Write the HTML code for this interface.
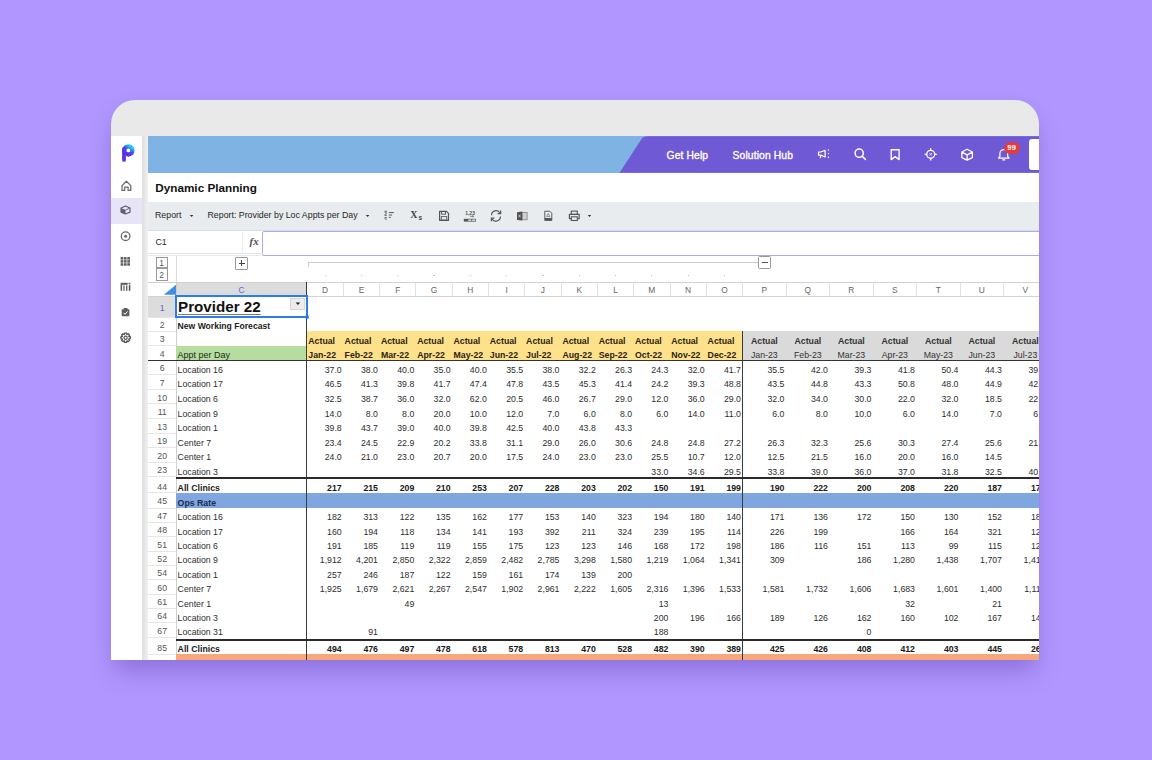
<!DOCTYPE html>
<html><head><meta charset="utf-8"><style>
*{margin:0;padding:0;box-sizing:border-box}
html,body{width:1152px;height:760px;overflow:hidden;background:#b096fe;font-family:"Liberation Sans",sans-serif}
.abs{position:absolute}
#shadow{position:absolute;left:131px;top:560px;width:888px;height:100px;box-shadow:0 18px 34px rgba(70,30,150,0.32);border-radius:10px}
#win{position:absolute;left:111px;top:100px;width:928px;height:560px;border-radius:24px 24px 0 0;overflow:hidden;background:#e9e9e9;box-shadow:0 14px 24px -4px rgba(70,35,150,0.34)}
.t{position:absolute;white-space:nowrap;line-height:1}
.c{text-align:center}
.rt{text-align:right}
svg{position:absolute;overflow:visible}
</style></head><body>

<div id="win">
<div class="abs" style="left:0.00px;top:36.30px;width:31.00px;height:523.70px;background:#fff"></div>
<div class="abs" style="left:31.00px;top:36.30px;width:6.00px;height:523.70px;background:linear-gradient(90deg,#dedede,#f0f0f0)"></div>
<div class="abs" style="left:0.00px;top:98.00px;width:31.00px;height:25.50px;background:#e7e4f8"></div>
<svg style="left:4.00px;top:40.00px" width="25.00" height="25.00" viewBox="115.00 140.00 25.00 25.00"><defs><linearGradient id="lg" x1="0.15" y1="0.85" x2="0.75" y2="0.05"><stop offset="0" stop-color="#5533e6"/><stop offset="0.5" stop-color="#4848ee"/><stop offset="0.78" stop-color="#2f8cf0"/><stop offset="1" stop-color="#20cdf0"/></linearGradient></defs>
<rect x="122.1" y="147" width="3.8" height="14.8" rx="1.9" fill="#5535e4"/>
<circle cx="128.4" cy="150.4" r="4.1" fill="none" stroke="url(#lg)" stroke-width="4.3"/></svg>
<svg style="left:7.00px;top:76.00px" width="16.00" height="18.00" viewBox="118.00 176.00 16.00 18.00"><path d="M122 185.6 L126.4 181.2 L130.8 185.6 V190.4 H128.1 V187.2 H124.7 V190.4 H122 Z" fill="none" stroke="#6b6b6b" stroke-width="1.25" stroke-linejoin="round"/></svg>
<svg style="left:6.00px;top:103.00px" width="16.00" height="16.00" viewBox="117.00 203.00 16.00 16.00"><path d="M125.5 205.9 L130 208 V212.1 L125.5 214 L121 212.1 V208 Z" fill="none" stroke="#5c5c66" stroke-width="1.15" stroke-linejoin="round"/><path d="M121.2 208.1 L125.5 210.1 L125.5 213.8 L121.2 212 Z" fill="#5c5c66"/><path d="M125.5 210.1 L129.8 208.1" stroke="#5c5c66" stroke-width="0.9"/></svg>
<svg style="left:7.00px;top:129.00px" width="16.00" height="16.00" viewBox="118.00 229.00 16.00 16.00"><circle cx="125.6" cy="236.2" r="4.3" fill="none" stroke="#6b6b6b" stroke-width="1.3"/><circle cx="125.6" cy="236.2" r="1.5" fill="#6b6b6b"/></svg>
<svg style="left:7.00px;top:154.00px" width="16.00" height="16.00" viewBox="118.00 254.00 16.00 16.00"><rect x="120.60" y="257.10" width="2.7" height="2.5" fill="#5e5e5e"/><rect x="120.60" y="260.15" width="2.7" height="2.5" fill="#5e5e5e"/><rect x="120.60" y="263.20" width="2.7" height="2.5" fill="#5e5e5e"/><rect x="123.95" y="257.10" width="2.7" height="2.5" fill="#5e5e5e"/><rect x="123.95" y="260.15" width="2.7" height="2.5" fill="#5e5e5e"/><rect x="123.95" y="263.20" width="2.7" height="2.5" fill="#5e5e5e"/><rect x="127.30" y="257.10" width="2.7" height="2.5" fill="#5e5e5e"/><rect x="127.30" y="260.15" width="2.7" height="2.5" fill="#5e5e5e"/><rect x="127.30" y="263.20" width="2.7" height="2.5" fill="#5e5e5e"/></svg>
<svg style="left:7.00px;top:180.00px" width="16.00" height="14.00" viewBox="118.00 280.00 16.00 14.00"><rect x="120.6" y="282.8" width="7.1" height="2" fill="#5a5a5a"/><rect x="128.6" y="282.8" width="1.8" height="1.6" fill="#5a5a5a"/><rect x="120.6" y="284.6" width="1.5" height="6.2" fill="#5a5a5a"/><rect x="123.4" y="285.4" width="1.2" height="5.4" fill="#5a5a5a"/><rect x="126.1" y="285.4" width="1.3" height="5.4" fill="#5a5a5a"/><rect x="128.8" y="285.2" width="1.6" height="5.6" fill="#5a5a5a"/></svg>
<svg style="left:7.00px;top:205.00px" width="16.00" height="14.00" viewBox="118.00 305.00 16.00 14.00"><rect x="121.7" y="309.2" width="7.7" height="7.1" rx="1" fill="#5e5e5e"/><rect x="123.6" y="308" width="3.9" height="2.2" rx="0.6" fill="#5e5e5e"/><path d="M123.5 312.8 L125 314.3 L127.6 311.4" fill="none" stroke="#fff" stroke-width="1"/></svg>
<svg style="left:7.00px;top:230.00px" width="16.00" height="16.00" viewBox="118.00 330.00 16.00 16.00"><path d="M130.21 336.77 L130.21 338.63 L128.88 338.93 L128.79 339.14 L129.52 340.30 L128.20 341.62 L127.04 340.89 L126.83 340.98 L126.53 342.31 L124.67 342.31 L124.37 340.98 L124.16 340.89 L123.00 341.62 L121.68 340.30 L122.41 339.14 L122.32 338.93 L120.99 338.63 L120.99 336.77 L122.32 336.47 L122.41 336.26 L121.68 335.10 L123.00 333.78 L124.16 334.51 L124.37 334.42 L124.67 333.09 L126.53 333.09 L126.83 334.42 L127.04 334.51 L128.20 333.78 L129.52 335.10 L128.79 336.26 L128.88 336.47 Z" fill="none" stroke="#555" stroke-width="1.35" stroke-linejoin="round"/><circle cx="125.60" cy="337.70" r="1.6" fill="none" stroke="#555" stroke-width="1.2"/></svg>
<div class="abs" style="left:37.00px;top:36.30px;width:891.00px;height:36.40px;background:#7eb3e4"></div>
<svg style="left:506.00px;top:36.00px" width="422.00" height="37.00" viewBox="617.00 136.00 422.00 37.00"><path d="M618.4 172.7 Q619.6 172.7 620.4 171.4 L641.2 139.4 Q643 136.3 647.8 136.3 L1039 136.3 L1039 172.7 Z" fill="#7059d5"/></svg>
<div class="t " style="left:555.60px;top:50.58px;font-size:10.30px;color:#fff;-webkit-text-stroke:0.35px #fff;letter-spacing:0.12px">Get Help</div>
<div class="t " style="left:621.60px;top:50.58px;font-size:10.30px;color:#fff;-webkit-text-stroke:0.35px #fff;letter-spacing:0.12px">Solution Hub</div>
<svg style="left:703.00px;top:46.00px" width="20.00" height="16.00" viewBox="814.00 146.00 20.00 16.00"><path d="M818.5 152 H820.9 L825.1 150.3 V157 L820.9 155.1 H818.5 Z" fill="none" stroke="#fff" stroke-width="1.2" stroke-linejoin="round"/><path d="M820.5 155.3 V158.3" stroke="#fff" stroke-width="1.2"/><circle cx="828.4" cy="150" r="0.7" fill="#fff"/><circle cx="828.4" cy="153.6" r="0.7" fill="#fff"/><circle cx="828.4" cy="157.3" r="0.7" fill="#fff"/></svg>
<svg style="left:741.00px;top:46.00px" width="16.00" height="16.00" viewBox="852.00 146.00 16.00 16.00"><circle cx="859.2" cy="153.2" r="4.1" fill="none" stroke="#fff" stroke-width="1.5"/><path d="M862.2 156.3 L865.4 159.4" stroke="#fff" stroke-width="1.6" stroke-linecap="round"/></svg>
<svg style="left:777.00px;top:46.00px" width="14.00" height="16.00" viewBox="888.00 146.00 14.00 16.00"><path d="M891.2 149.7 H899.1 V159.6 L895.15 156.6 L891.2 159.6 Z" fill="none" stroke="#fff" stroke-width="1.35" stroke-linejoin="round"/></svg>
<svg style="left:812.00px;top:46.00px" width="16.00" height="16.00" viewBox="923.00 146.00 16.00 16.00"><circle cx="930.7" cy="154.3" r="4" fill="none" stroke="#fff" stroke-width="1.35"/><path d="M930.7 148.2 V150.8 M930.7 157.8 V160.4 M924.6 154.3 H927.2 M934.2 154.3 H936.8" stroke="#fff" stroke-width="1.35"/><path d="M929.6 153.2 L931.8 155.4 M931.8 153.2 L929.6 155.4" stroke="#fff" stroke-width="0.9"/></svg>
<svg style="left:848.00px;top:46.00px" width="16.00" height="16.00" viewBox="959.00 146.00 16.00 16.00"><path d="M967.1 149.2 L972.4 152 V157.6 L967.1 160.2 L961.8 157.6 V152 Z M961.9 152.1 L967.1 154.8 L972.3 152.1 M967.1 154.8 V160" fill="none" stroke="#fff" stroke-width="1.3" stroke-linejoin="round"/></svg>
<svg style="left:885.00px;top:46.00px" width="16.00" height="16.00" viewBox="996.00 146.00 16.00 16.00"><path d="M998.6 158.2 H1009 L1007.7 156.4 V153.5 A3.9 3.9 0 0 0 999.9 153.5 V156.4 Z" fill="none" stroke="#fff" stroke-width="1.25" stroke-linejoin="round"/><path d="M1002.3 159.8 H1005.3" stroke="#fff" stroke-width="1.2"/></svg>
<div class="abs" style="left:892.80px;top:42.10px;width:16.00px;height:11.80px;background:#e23d3d;border-radius:6px"></div>
<div class="t c" style="left:892.80px;top:44.17px;width:15.80px;font-size:7.60px;font-weight:bold;color:#fff;letter-spacing:0.1px">99</div>
<div class="abs" style="left:918.00px;top:39.30px;width:16.00px;height:30.70px;background:#fff;border-radius:3px"></div>
<div class="abs" style="left:37.00px;top:72.70px;width:891.00px;height:28.90px;background:#fff"></div>
<div class="t " style="left:44.30px;top:81.88px;font-size:11.72px;font-weight:bold;color:#111">Dynamic Planning</div>
<div class="abs" style="left:37.00px;top:101.60px;width:891.00px;height:28.90px;background:#e9ecef"></div>
<div class="abs" style="left:37.00px;top:130.00px;width:891.00px;height:1.00px;background:#d9dce3"></div>
<div class="t " style="left:44.00px;top:111.35px;font-size:8.80px;color:#262626">Report</div>
<svg style="left:77.00px;top:113.00px" width="8.00" height="5.00" viewBox="188.00 213.00 8.00 5.00"><path d="M189.8 215 H193.4 L191.6 216.9 Z" fill="#333"/></svg>
<div class="t " style="left:96.50px;top:111.35px;font-size:8.80px;color:#262626">Report: Provider by Loc Appts per Day</div>
<svg style="left:253.00px;top:113.00px" width="8.00" height="5.00" viewBox="364.00 213.00 8.00 5.00"><path d="M365.8 215 H369.4 L367.6 216.9 Z" fill="#333"/></svg>
<svg style="left:271.00px;top:108.00px" width="14.00" height="16.00" viewBox="382.00 208.00 14.00 16.00"><path d="M384.6 211.2 H386.8 M384.6 212.2 H386.8 M384.6 214.4 L386.8 213.6 M384.6 215.4 H386.8 M384.6 217.6 H386.8 M384.6 218.6 L386.8 219.4" stroke="#505050" stroke-width="0.85"/><path d="M388.8 212.6 H393.9 M388.8 215 H392.1 M388.8 217.4 H390.7" stroke="#5a5a5a" stroke-width="1"/></svg>
<div class="t " style="left:299.30px;top:109.73px;font-size:10.00px;font-family:&quot;Liberation Serif&quot;,serif;color:#444;font-weight:bold">X</div>
<div class="t " style="left:307.40px;top:115.41px;font-size:6.60px;color:#444;font-weight:bold">s</div>
<svg style="left:326.00px;top:109.00px" width="14.00" height="14.00" viewBox="437.00 209.00 14.00 14.00"><path d="M439.6 211.4 H446.6 L448.5 213.3 V220.4 H439.6 Z" fill="none" stroke="#555" stroke-width="1.2" stroke-linejoin="round"/><rect x="441.6" y="211.6" width="4" height="2.6" fill="none" stroke="#555" stroke-width="0.9"/><rect x="441.3" y="216.6" width="5.5" height="3.5" fill="none" stroke="#555" stroke-width="0.9"/></svg>
<svg style="left:351.00px;top:108.00px" width="16.00" height="16.00" viewBox="462.00 208.00 16.00 16.00"><text x="465.2" y="214.6" font-size="5" font-family="Liberation Sans" font-weight="bold" fill="#555">1,23</text><path d="M470 216.3 H473.6 M472.4 215.4 L473.6 216.3 L472.4 217.2" stroke="#555" stroke-width="0.7" fill="none"/><rect x="463.8" y="218.8" width="12.1" height="2.8" fill="#555"/><rect x="468.3" y="219.5" width="3" height="1.4" fill="#e9ecef"/><rect x="472.2" y="219.5" width="3" height="1.4" fill="#e9ecef"/></svg>
<svg style="left:377.00px;top:108.00px" width="16.00" height="16.00" viewBox="488.00 208.00 16.00 16.00"><path d="M491.5 215.2 A4.6 4.6 0 0 1 500 212.8" fill="none" stroke="#555" stroke-width="1.2"/><path d="M500.6 210.6 V213.6 H497.6" fill="none" stroke="#555" stroke-width="1.2"/><path d="M500.5 216.6 A4.6 4.6 0 0 1 492 219" fill="none" stroke="#555" stroke-width="1.2"/><path d="M491.4 221.2 V218.2 H494.4" fill="none" stroke="#555" stroke-width="1.2"/></svg>
<svg style="left:404.00px;top:109.00px" width="14.00" height="14.00" viewBox="515.00 209.00 14.00 14.00"><rect x="521.5" y="212.6" width="5.6" height="7.2" fill="#d0d0d0" stroke="#777" stroke-width="0.7"/><path d="M517 212.2 L522.4 211.6 V220.6 L517 220 Z" fill="#505050"/><path d="M518.6 214.6 L520.6 217.4 M520.6 214.6 L518.6 217.4" stroke="#fff" stroke-width="0.6"/></svg>
<svg style="left:431.00px;top:109.00px" width="14.00" height="14.00" viewBox="542.00 209.00 14.00 14.00"><path d="M544.8 211.2 H549.8 L551.8 213.2 V220.4 H544.8 Z" fill="none" stroke="#555" stroke-width="0.95" stroke-linejoin="round"/><rect x="544.8" y="218" width="7" height="2.4" fill="#555"/><path d="M546.6 216.6 L548.2 213.4 L550 216.6 Z" fill="none" stroke="#555" stroke-width="0.6"/></svg>
<svg style="left:456.00px;top:108.00px" width="16.00" height="16.00" viewBox="567.00 208.00 16.00 16.00"><rect x="571.3" y="211.1" width="6" height="3.3" fill="none" stroke="#555" stroke-width="1.1"/><path d="M571 218.6 H569.4 V214.4 H579.2 V218.6 H577.6" fill="none" stroke="#555" stroke-width="1.2" stroke-linejoin="round"/><rect x="571.3" y="216.8" width="6" height="3.7" fill="none" stroke="#555" stroke-width="1.1"/></svg>
<svg style="left:475.00px;top:113.00px" width="8.00" height="5.00" viewBox="586.00 213.00 8.00 5.00"><path d="M587.8 215 H591.2 L589.5 216.9 Z" fill="#333"/></svg>
<div class="abs" style="left:37.00px;top:131.40px;width:891.00px;height:23.60px;background:#fff"></div>
<div class="t " style="left:44.50px;top:137.85px;font-size:8.80px;color:#262626">C1</div>
<div class="abs" style="left:131.00px;top:132.00px;width:1.00px;height:22.00px;background:#ececec"></div>
<div class="t " style="left:138.60px;top:136.29px;font-size:11.00px;font-family:&quot;Liberation Serif&quot;,serif;color:#505050;font-weight:bold"><i>fx</i></div>
<div class="abs" style="left:151.30px;top:130.60px;width:800px;height:25.00px;border:1.2px solid #b0a7e8;border-radius:2px;background:#fff"></div>
<div class="abs" style="left:37.00px;top:153.00px;width:114.50px;height:1.00px;background:#e4e4e4"></div>
<div class="abs" style="left:37.00px;top:155.60px;width:891.00px;height:26.40px;background:#fff"></div>
<div class="abs" style="left:44.60px;top:156.60px;width:12.10px;height:11.70px;border:1px solid #999;background:#fff"></div>
<div class="abs" style="left:44.60px;top:168.00px;width:12.10px;height:12.50px;border:1px solid #999;background:#fff"></div>
<div class="t c" style="left:44.60px;top:158.89px;width:12.10px;font-size:8.40px;color:#555">1</div>
<div class="t c" style="left:44.60px;top:171.19px;width:12.10px;font-size:8.40px;color:#555">2</div>
<div class="abs" style="left:65.00px;top:155.60px;width:1.00px;height:26.40px;background:#dcdcdc"></div>
<div class="abs" style="left:124.30px;top:156.60px;width:13.10px;height:13.00px;border:1px solid #999;border-radius:1px;background:#fff"></div>
<div class="abs" style="left:127.60px;top:162.60px;width:6.60px;height:1.20px;background:#444"></div>
<div class="abs" style="left:130.30px;top:159.90px;width:1.20px;height:6.60px;background:#444"></div>
<div class="abs" style="left:197.00px;top:162.30px;width:450.20px;height:1.00px;background:#cdcdcd"></div>
<div class="abs" style="left:197.00px;top:162.30px;width:0.90px;height:5.10px;background:#cdcdcd"></div>
<div class="abs" style="left:647.20px;top:156.10px;width:13.00px;height:13.20px;border:1px solid #999;border-radius:1.5px;background:#fff"></div>
<div class="abs" style="left:650.80px;top:162.30px;width:6.40px;height:1.20px;background:#555"></div>
<div class="abs" style="left:213.55px;top:175.00px;width:1.20px;height:1.20px;background:#c0c0c0"></div>
<div class="abs" style="left:249.85px;top:175.00px;width:1.20px;height:1.20px;background:#c0c0c0"></div>
<div class="abs" style="left:286.15px;top:175.00px;width:1.20px;height:1.20px;background:#c0c0c0"></div>
<div class="abs" style="left:322.45px;top:175.00px;width:1.20px;height:1.20px;background:#c0c0c0"></div>
<div class="abs" style="left:358.75px;top:175.00px;width:1.20px;height:1.20px;background:#c0c0c0"></div>
<div class="abs" style="left:395.05px;top:175.00px;width:1.20px;height:1.20px;background:#c0c0c0"></div>
<div class="abs" style="left:431.35px;top:175.00px;width:1.20px;height:1.20px;background:#c0c0c0"></div>
<div class="abs" style="left:467.65px;top:175.00px;width:1.20px;height:1.20px;background:#c0c0c0"></div>
<div class="abs" style="left:503.95px;top:175.00px;width:1.20px;height:1.20px;background:#c0c0c0"></div>
<div class="abs" style="left:540.25px;top:175.00px;width:1.20px;height:1.20px;background:#c0c0c0"></div>
<div class="abs" style="left:576.55px;top:175.00px;width:1.20px;height:1.20px;background:#c0c0c0"></div>
<div class="abs" style="left:612.85px;top:175.00px;width:1.20px;height:1.20px;background:#c0c0c0"></div>
<div class="abs" style="left:37.00px;top:182.00px;width:891.00px;height:378.00px;background:#fff"></div>
<div class="abs" style="left:37.00px;top:181.60px;width:891.00px;height:1.00px;background:#d2d2d2"></div>
<div class="abs" style="left:65.30px;top:182.60px;width:130.70px;height:13.90px;background:#dcdcdc"></div>
<div class="t c" style="left:65.30px;top:185.69px;width:130.70px;font-size:8.40px;color:#6a5cd6">C</div>
<div class="t c" style="left:196.00px;top:185.69px;width:36.30px;font-size:8.40px;color:#666">D</div>
<div class="abs" style="left:231.80px;top:182.60px;width:1.00px;height:13.90px;background:#e2e2e2"></div>
<div class="t c" style="left:232.30px;top:185.69px;width:36.30px;font-size:8.40px;color:#666">E</div>
<div class="abs" style="left:268.10px;top:182.60px;width:1.00px;height:13.90px;background:#e2e2e2"></div>
<div class="t c" style="left:268.60px;top:185.69px;width:36.30px;font-size:8.40px;color:#666">F</div>
<div class="abs" style="left:304.40px;top:182.60px;width:1.00px;height:13.90px;background:#e2e2e2"></div>
<div class="t c" style="left:304.90px;top:185.69px;width:36.30px;font-size:8.40px;color:#666">G</div>
<div class="abs" style="left:340.70px;top:182.60px;width:1.00px;height:13.90px;background:#e2e2e2"></div>
<div class="t c" style="left:341.20px;top:185.69px;width:36.30px;font-size:8.40px;color:#666">H</div>
<div class="abs" style="left:377.00px;top:182.60px;width:1.00px;height:13.90px;background:#e2e2e2"></div>
<div class="t c" style="left:377.50px;top:185.69px;width:36.30px;font-size:8.40px;color:#666">I</div>
<div class="abs" style="left:413.30px;top:182.60px;width:1.00px;height:13.90px;background:#e2e2e2"></div>
<div class="t c" style="left:413.80px;top:185.69px;width:36.30px;font-size:8.40px;color:#666">J</div>
<div class="abs" style="left:449.60px;top:182.60px;width:1.00px;height:13.90px;background:#e2e2e2"></div>
<div class="t c" style="left:450.10px;top:185.69px;width:36.30px;font-size:8.40px;color:#666">K</div>
<div class="abs" style="left:485.90px;top:182.60px;width:1.00px;height:13.90px;background:#e2e2e2"></div>
<div class="t c" style="left:486.40px;top:185.69px;width:36.30px;font-size:8.40px;color:#666">L</div>
<div class="abs" style="left:522.20px;top:182.60px;width:1.00px;height:13.90px;background:#e2e2e2"></div>
<div class="t c" style="left:522.70px;top:185.69px;width:36.30px;font-size:8.40px;color:#666">M</div>
<div class="abs" style="left:558.50px;top:182.60px;width:1.00px;height:13.90px;background:#e2e2e2"></div>
<div class="t c" style="left:559.00px;top:185.69px;width:36.30px;font-size:8.40px;color:#666">N</div>
<div class="abs" style="left:594.80px;top:182.60px;width:1.00px;height:13.90px;background:#e2e2e2"></div>
<div class="t c" style="left:595.30px;top:185.69px;width:36.30px;font-size:8.40px;color:#666">O</div>
<div class="abs" style="left:631.10px;top:182.60px;width:1.00px;height:13.90px;background:#e2e2e2"></div>
<div class="t c" style="left:631.60px;top:185.69px;width:43.50px;font-size:8.40px;color:#666">P</div>
<div class="abs" style="left:674.60px;top:182.60px;width:1.00px;height:13.90px;background:#e2e2e2"></div>
<div class="t c" style="left:675.10px;top:185.69px;width:43.50px;font-size:8.40px;color:#666">Q</div>
<div class="abs" style="left:718.10px;top:182.60px;width:1.00px;height:13.90px;background:#e2e2e2"></div>
<div class="t c" style="left:718.60px;top:185.69px;width:43.50px;font-size:8.40px;color:#666">R</div>
<div class="abs" style="left:761.60px;top:182.60px;width:1.00px;height:13.90px;background:#e2e2e2"></div>
<div class="t c" style="left:762.10px;top:185.69px;width:43.50px;font-size:8.40px;color:#666">S</div>
<div class="abs" style="left:805.10px;top:182.60px;width:1.00px;height:13.90px;background:#e2e2e2"></div>
<div class="t c" style="left:805.60px;top:185.69px;width:43.50px;font-size:8.40px;color:#666">T</div>
<div class="abs" style="left:848.60px;top:182.60px;width:1.00px;height:13.90px;background:#e2e2e2"></div>
<div class="t c" style="left:849.10px;top:185.69px;width:43.50px;font-size:8.40px;color:#666">U</div>
<div class="abs" style="left:892.10px;top:182.60px;width:1.00px;height:13.90px;background:#e2e2e2"></div>
<div class="t c" style="left:892.60px;top:185.69px;width:43.50px;font-size:8.40px;color:#666">V</div>
<div class="abs" style="left:935.60px;top:182.60px;width:1.00px;height:13.90px;background:#e2e2e2"></div>
<div class="abs" style="left:37.00px;top:196.00px;width:891.00px;height:1.00px;background:#d2d2d2"></div>
<svg style="left:49.00px;top:183.00px" width="18.00" height="14.00" viewBox="160.00 283.00 18.00 14.00"><path d="M176 284.8 V294.8 H163.8 Z" fill="#3f8ee8"/></svg>
<div class="abs" style="left:37.00px;top:216.80px;width:28.30px;height:1.00px;background:#e6e6e6"></div>
<div class="abs" style="left:37.00px;top:230.70px;width:28.30px;height:1.00px;background:#e6e6e6"></div>
<div class="abs" style="left:37.00px;top:245.20px;width:28.30px;height:1.00px;background:#e6e6e6"></div>
<div class="abs" style="left:37.00px;top:259.80px;width:28.30px;height:1.00px;background:#e6e6e6"></div>
<div class="abs" style="left:37.00px;top:274.35px;width:28.30px;height:1.00px;background:#e6e6e6"></div>
<div class="abs" style="left:37.00px;top:288.90px;width:28.30px;height:1.00px;background:#e6e6e6"></div>
<div class="abs" style="left:37.00px;top:303.45px;width:28.30px;height:1.00px;background:#e6e6e6"></div>
<div class="abs" style="left:37.00px;top:318.00px;width:28.30px;height:1.00px;background:#e6e6e6"></div>
<div class="abs" style="left:37.00px;top:332.55px;width:28.30px;height:1.00px;background:#e6e6e6"></div>
<div class="abs" style="left:37.00px;top:347.10px;width:28.30px;height:1.00px;background:#e6e6e6"></div>
<div class="abs" style="left:37.00px;top:361.65px;width:28.30px;height:1.00px;background:#e6e6e6"></div>
<div class="abs" style="left:37.00px;top:376.20px;width:28.30px;height:1.00px;background:#e6e6e6"></div>
<div class="abs" style="left:37.00px;top:392.30px;width:28.30px;height:1.00px;background:#e6e6e6"></div>
<div class="abs" style="left:37.00px;top:407.50px;width:28.30px;height:1.00px;background:#e6e6e6"></div>
<div class="abs" style="left:37.00px;top:421.85px;width:28.30px;height:1.00px;background:#e6e6e6"></div>
<div class="abs" style="left:37.00px;top:436.20px;width:28.30px;height:1.00px;background:#e6e6e6"></div>
<div class="abs" style="left:37.00px;top:450.55px;width:28.30px;height:1.00px;background:#e6e6e6"></div>
<div class="abs" style="left:37.00px;top:464.90px;width:28.30px;height:1.00px;background:#e6e6e6"></div>
<div class="abs" style="left:37.00px;top:479.25px;width:28.30px;height:1.00px;background:#e6e6e6"></div>
<div class="abs" style="left:37.00px;top:493.60px;width:28.30px;height:1.00px;background:#e6e6e6"></div>
<div class="abs" style="left:37.00px;top:507.95px;width:28.30px;height:1.00px;background:#e6e6e6"></div>
<div class="abs" style="left:37.00px;top:522.30px;width:28.30px;height:1.00px;background:#e6e6e6"></div>
<div class="abs" style="left:37.00px;top:536.65px;width:28.30px;height:1.00px;background:#e6e6e6"></div>
<div class="abs" style="left:37.00px;top:553.70px;width:28.30px;height:1.00px;background:#e6e6e6"></div>
<div class="abs" style="left:37.00px;top:568.30px;width:28.30px;height:1.00px;background:#e6e6e6"></div>
<div class="abs" style="left:37.00px;top:196.50px;width:28.30px;height:20.80px;background:#dcdcdc"></div>
<div class="t c" style="left:37.00px;top:203.64px;width:28.30px;font-size:8.70px;color:#6a5cd6">1</div>
<div class="t c" style="left:37.00px;top:221.09px;width:28.30px;font-size:8.70px;color:#555">2</div>
<div class="t c" style="left:37.00px;top:235.29px;width:28.30px;font-size:8.70px;color:#555">3</div>
<div class="t c" style="left:37.00px;top:249.84px;width:28.30px;font-size:8.70px;color:#555">4</div>
<div class="t c" style="left:37.00px;top:264.41px;width:28.30px;font-size:8.70px;color:#555">6</div>
<div class="t c" style="left:37.00px;top:278.96px;width:28.30px;font-size:8.70px;color:#555">7</div>
<div class="t c" style="left:37.00px;top:293.51px;width:28.30px;font-size:8.70px;color:#555">10</div>
<div class="t c" style="left:37.00px;top:308.06px;width:28.30px;font-size:8.70px;color:#555">11</div>
<div class="t c" style="left:37.00px;top:322.61px;width:28.30px;font-size:8.70px;color:#555">13</div>
<div class="t c" style="left:37.00px;top:337.16px;width:28.30px;font-size:8.70px;color:#555">19</div>
<div class="t c" style="left:37.00px;top:351.71px;width:28.30px;font-size:8.70px;color:#555">20</div>
<div class="t c" style="left:37.00px;top:366.26px;width:28.30px;font-size:8.70px;color:#555">23</div>
<div class="t c" style="left:37.00px;top:382.79px;width:28.30px;font-size:8.70px;color:#555">44</div>
<div class="t c" style="left:37.00px;top:397.24px;width:28.30px;font-size:8.70px;color:#555">45</div>
<div class="t c" style="left:37.00px;top:412.01px;width:28.30px;font-size:8.70px;color:#555">47</div>
<div class="t c" style="left:37.00px;top:426.36px;width:28.30px;font-size:8.70px;color:#555">48</div>
<div class="t c" style="left:37.00px;top:440.71px;width:28.30px;font-size:8.70px;color:#555">51</div>
<div class="t c" style="left:37.00px;top:455.06px;width:28.30px;font-size:8.70px;color:#555">52</div>
<div class="t c" style="left:37.00px;top:469.41px;width:28.30px;font-size:8.70px;color:#555">54</div>
<div class="t c" style="left:37.00px;top:483.76px;width:28.30px;font-size:8.70px;color:#555">60</div>
<div class="t c" style="left:37.00px;top:498.11px;width:28.30px;font-size:8.70px;color:#555">61</div>
<div class="t c" style="left:37.00px;top:512.46px;width:28.30px;font-size:8.70px;color:#555">64</div>
<div class="t c" style="left:37.00px;top:526.81px;width:28.30px;font-size:8.70px;color:#555">67</div>
<div class="t c" style="left:37.00px;top:544.44px;width:28.30px;font-size:8.70px;color:#555">85</div>
<div class="abs" style="left:65.00px;top:182.00px;width:1.10px;height:378.00px;background:#cfcfcf"></div>
<div class="abs" style="left:196.00px;top:231.20px;width:435.60px;height:29.10px;background:#fde18b"></div>
<div class="abs" style="left:631.60px;top:231.20px;width:296.40px;height:29.10px;background:#dadada"></div>
<div class="abs" style="left:65.30px;top:245.70px;width:130.70px;height:14.60px;background:#b6dc9f"></div>
<div class="abs" style="left:65.30px;top:392.80px;width:862.70px;height:15.20px;background:#80a6df"></div>
<div class="abs" style="left:65.30px;top:554.20px;width:862.70px;height:14.60px;background:#f8a878"></div>
<div class="t " style="left:197.30px;top:236.69px;font-size:8.75px;font-weight:bold;color:#2b2410">Actual</div>
<div class="t " style="left:197.30px;top:251.29px;font-size:8.75px;font-weight:bold;color:#2b2410">Jan-22</div>
<div class="t " style="left:233.60px;top:236.69px;font-size:8.75px;font-weight:bold;color:#2b2410">Actual</div>
<div class="t " style="left:233.60px;top:251.29px;font-size:8.75px;font-weight:bold;color:#2b2410">Feb-22</div>
<div class="t " style="left:269.90px;top:236.69px;font-size:8.75px;font-weight:bold;color:#2b2410">Actual</div>
<div class="t " style="left:269.90px;top:251.29px;font-size:8.75px;font-weight:bold;color:#2b2410">Mar-22</div>
<div class="t " style="left:306.20px;top:236.69px;font-size:8.75px;font-weight:bold;color:#2b2410">Actual</div>
<div class="t " style="left:306.20px;top:251.29px;font-size:8.75px;font-weight:bold;color:#2b2410">Apr-22</div>
<div class="t " style="left:342.50px;top:236.69px;font-size:8.75px;font-weight:bold;color:#2b2410">Actual</div>
<div class="t " style="left:342.50px;top:251.29px;font-size:8.75px;font-weight:bold;color:#2b2410">May-22</div>
<div class="t " style="left:378.80px;top:236.69px;font-size:8.75px;font-weight:bold;color:#2b2410">Actual</div>
<div class="t " style="left:378.80px;top:251.29px;font-size:8.75px;font-weight:bold;color:#2b2410">Jun-22</div>
<div class="t " style="left:415.10px;top:236.69px;font-size:8.75px;font-weight:bold;color:#2b2410">Actual</div>
<div class="t " style="left:415.10px;top:251.29px;font-size:8.75px;font-weight:bold;color:#2b2410">Jul-22</div>
<div class="t " style="left:451.40px;top:236.69px;font-size:8.75px;font-weight:bold;color:#2b2410">Actual</div>
<div class="t " style="left:451.40px;top:251.29px;font-size:8.75px;font-weight:bold;color:#2b2410">Aug-22</div>
<div class="t " style="left:487.70px;top:236.69px;font-size:8.75px;font-weight:bold;color:#2b2410">Actual</div>
<div class="t " style="left:487.70px;top:251.29px;font-size:8.75px;font-weight:bold;color:#2b2410">Sep-22</div>
<div class="t " style="left:524.00px;top:236.69px;font-size:8.75px;font-weight:bold;color:#2b2410">Actual</div>
<div class="t " style="left:524.00px;top:251.29px;font-size:8.75px;font-weight:bold;color:#2b2410">Oct-22</div>
<div class="t " style="left:560.30px;top:236.69px;font-size:8.75px;font-weight:bold;color:#2b2410">Actual</div>
<div class="t " style="left:560.30px;top:251.29px;font-size:8.75px;font-weight:bold;color:#2b2410">Nov-22</div>
<div class="t " style="left:596.60px;top:236.69px;font-size:8.75px;font-weight:bold;color:#2b2410">Actual</div>
<div class="t " style="left:596.60px;top:251.29px;font-size:8.75px;font-weight:bold;color:#2b2410">Dec-22</div>
<div class="t c" style="left:631.60px;top:236.69px;width:43.50px;font-size:8.75px;font-weight:bold;color:#333">Actual</div>
<div class="t c" style="left:631.60px;top:251.29px;width:43.50px;font-size:8.75px;color:#333">Jan-23</div>
<div class="t c" style="left:675.10px;top:236.69px;width:43.50px;font-size:8.75px;font-weight:bold;color:#333">Actual</div>
<div class="t c" style="left:675.10px;top:251.29px;width:43.50px;font-size:8.75px;color:#333">Feb-23</div>
<div class="t c" style="left:718.60px;top:236.69px;width:43.50px;font-size:8.75px;font-weight:bold;color:#333">Actual</div>
<div class="t c" style="left:718.60px;top:251.29px;width:43.50px;font-size:8.75px;color:#333">Mar-23</div>
<div class="t c" style="left:762.10px;top:236.69px;width:43.50px;font-size:8.75px;font-weight:bold;color:#333">Actual</div>
<div class="t c" style="left:762.10px;top:251.29px;width:43.50px;font-size:8.75px;color:#333">Apr-23</div>
<div class="t c" style="left:805.60px;top:236.69px;width:43.50px;font-size:8.75px;font-weight:bold;color:#333">Actual</div>
<div class="t c" style="left:805.60px;top:251.29px;width:43.50px;font-size:8.75px;color:#333">May-23</div>
<div class="t c" style="left:849.10px;top:236.69px;width:43.50px;font-size:8.75px;font-weight:bold;color:#333">Actual</div>
<div class="t c" style="left:849.10px;top:251.29px;width:43.50px;font-size:8.75px;color:#333">Jun-23</div>
<div class="t c" style="left:892.60px;top:236.69px;width:43.50px;font-size:8.75px;font-weight:bold;color:#333">Actual</div>
<div class="t c" style="left:892.60px;top:251.29px;width:43.50px;font-size:8.75px;color:#333">Jul-23</div>
<div class="t " style="left:66.60px;top:222.42px;font-size:8.60px;color:#222;font-weight:bold">New Working Forecast</div>
<div class="t " style="left:66.60px;top:251.18px;font-size:9.00px;color:#1c2a12;">Appt per Day</div>
<div class="t " style="left:66.60px;top:265.94px;font-size:8.75px;color:#2e2e2e;">Location 16</div>
<div class="t " style="left:66.60px;top:280.49px;font-size:8.75px;color:#2e2e2e;">Location 17</div>
<div class="t " style="left:66.60px;top:295.04px;font-size:8.75px;color:#2e2e2e;">Location 6</div>
<div class="t " style="left:66.60px;top:309.59px;font-size:8.75px;color:#2e2e2e;">Location 9</div>
<div class="t " style="left:66.60px;top:324.14px;font-size:8.75px;color:#2e2e2e;">Location 1</div>
<div class="t " style="left:66.60px;top:338.69px;font-size:8.75px;color:#2e2e2e;">Center 7</div>
<div class="t " style="left:66.60px;top:353.24px;font-size:8.75px;color:#2e2e2e;">Center 1</div>
<div class="t " style="left:66.60px;top:367.79px;font-size:8.75px;color:#2e2e2e;">Location 3</div>
<div class="t " style="left:66.60px;top:383.89px;font-size:8.75px;color:#222;font-weight:bold">All Clinics</div>
<div class="t " style="left:66.60px;top:399.09px;font-size:8.75px;color:#1b2b55;font-weight:bold">Ops Rate</div>
<div class="t " style="left:66.60px;top:413.44px;font-size:8.75px;color:#2e2e2e;">Location 16</div>
<div class="t " style="left:66.60px;top:427.79px;font-size:8.75px;color:#2e2e2e;">Location 17</div>
<div class="t " style="left:66.60px;top:442.14px;font-size:8.75px;color:#2e2e2e;">Location 6</div>
<div class="t " style="left:66.60px;top:456.49px;font-size:8.75px;color:#2e2e2e;">Location 9</div>
<div class="t " style="left:66.60px;top:470.84px;font-size:8.75px;color:#2e2e2e;">Location 1</div>
<div class="t " style="left:66.60px;top:485.19px;font-size:8.75px;color:#2e2e2e;">Center 7</div>
<div class="t " style="left:66.60px;top:499.54px;font-size:8.75px;color:#2e2e2e;">Center 1</div>
<div class="t " style="left:66.60px;top:513.89px;font-size:8.75px;color:#2e2e2e;">Location 3</div>
<div class="t " style="left:66.60px;top:528.24px;font-size:8.75px;color:#2e2e2e;">Location 31</div>
<div class="t " style="left:66.60px;top:545.29px;font-size:8.75px;color:#222;font-weight:bold">All Clinics</div>
<div class="t rt" style="left:196.00px;top:265.94px;width:34.70px;font-size:8.75px;color:#2e2e2e;">37.0</div>
<div class="t rt" style="left:232.30px;top:265.94px;width:34.70px;font-size:8.75px;color:#2e2e2e;">38.0</div>
<div class="t rt" style="left:268.60px;top:265.94px;width:34.70px;font-size:8.75px;color:#2e2e2e;">40.0</div>
<div class="t rt" style="left:304.90px;top:265.94px;width:34.70px;font-size:8.75px;color:#2e2e2e;">35.0</div>
<div class="t rt" style="left:341.20px;top:265.94px;width:34.70px;font-size:8.75px;color:#2e2e2e;">40.0</div>
<div class="t rt" style="left:377.50px;top:265.94px;width:34.70px;font-size:8.75px;color:#2e2e2e;">35.5</div>
<div class="t rt" style="left:413.80px;top:265.94px;width:34.70px;font-size:8.75px;color:#2e2e2e;">38.0</div>
<div class="t rt" style="left:450.10px;top:265.94px;width:34.70px;font-size:8.75px;color:#2e2e2e;">32.2</div>
<div class="t rt" style="left:486.40px;top:265.94px;width:34.70px;font-size:8.75px;color:#2e2e2e;">26.3</div>
<div class="t rt" style="left:522.70px;top:265.94px;width:34.70px;font-size:8.75px;color:#2e2e2e;">24.3</div>
<div class="t rt" style="left:559.00px;top:265.94px;width:34.70px;font-size:8.75px;color:#2e2e2e;">32.0</div>
<div class="t rt" style="left:595.30px;top:265.94px;width:34.70px;font-size:8.75px;color:#2e2e2e;">41.7</div>
<div class="t rt" style="left:631.60px;top:265.94px;width:41.90px;font-size:8.75px;color:#2e2e2e;">35.5</div>
<div class="t rt" style="left:675.10px;top:265.94px;width:41.90px;font-size:8.75px;color:#2e2e2e;">42.0</div>
<div class="t rt" style="left:718.60px;top:265.94px;width:41.90px;font-size:8.75px;color:#2e2e2e;">39.3</div>
<div class="t rt" style="left:762.10px;top:265.94px;width:41.90px;font-size:8.75px;color:#2e2e2e;">41.8</div>
<div class="t rt" style="left:805.60px;top:265.94px;width:41.90px;font-size:8.75px;color:#2e2e2e;">50.4</div>
<div class="t rt" style="left:849.10px;top:265.94px;width:41.90px;font-size:8.75px;color:#2e2e2e;">44.3</div>
<div class="t rt" style="left:892.60px;top:265.94px;width:41.90px;font-size:8.75px;color:#2e2e2e;">39.0</div>
<div class="t rt" style="left:196.00px;top:280.49px;width:34.70px;font-size:8.75px;color:#2e2e2e;">46.5</div>
<div class="t rt" style="left:232.30px;top:280.49px;width:34.70px;font-size:8.75px;color:#2e2e2e;">41.3</div>
<div class="t rt" style="left:268.60px;top:280.49px;width:34.70px;font-size:8.75px;color:#2e2e2e;">39.8</div>
<div class="t rt" style="left:304.90px;top:280.49px;width:34.70px;font-size:8.75px;color:#2e2e2e;">41.7</div>
<div class="t rt" style="left:341.20px;top:280.49px;width:34.70px;font-size:8.75px;color:#2e2e2e;">47.4</div>
<div class="t rt" style="left:377.50px;top:280.49px;width:34.70px;font-size:8.75px;color:#2e2e2e;">47.8</div>
<div class="t rt" style="left:413.80px;top:280.49px;width:34.70px;font-size:8.75px;color:#2e2e2e;">43.5</div>
<div class="t rt" style="left:450.10px;top:280.49px;width:34.70px;font-size:8.75px;color:#2e2e2e;">45.3</div>
<div class="t rt" style="left:486.40px;top:280.49px;width:34.70px;font-size:8.75px;color:#2e2e2e;">41.4</div>
<div class="t rt" style="left:522.70px;top:280.49px;width:34.70px;font-size:8.75px;color:#2e2e2e;">24.2</div>
<div class="t rt" style="left:559.00px;top:280.49px;width:34.70px;font-size:8.75px;color:#2e2e2e;">39.3</div>
<div class="t rt" style="left:595.30px;top:280.49px;width:34.70px;font-size:8.75px;color:#2e2e2e;">48.8</div>
<div class="t rt" style="left:631.60px;top:280.49px;width:41.90px;font-size:8.75px;color:#2e2e2e;">43.5</div>
<div class="t rt" style="left:675.10px;top:280.49px;width:41.90px;font-size:8.75px;color:#2e2e2e;">44.8</div>
<div class="t rt" style="left:718.60px;top:280.49px;width:41.90px;font-size:8.75px;color:#2e2e2e;">43.3</div>
<div class="t rt" style="left:762.10px;top:280.49px;width:41.90px;font-size:8.75px;color:#2e2e2e;">50.8</div>
<div class="t rt" style="left:805.60px;top:280.49px;width:41.90px;font-size:8.75px;color:#2e2e2e;">48.0</div>
<div class="t rt" style="left:849.10px;top:280.49px;width:41.90px;font-size:8.75px;color:#2e2e2e;">44.9</div>
<div class="t rt" style="left:892.60px;top:280.49px;width:41.90px;font-size:8.75px;color:#2e2e2e;">42.0</div>
<div class="t rt" style="left:196.00px;top:295.04px;width:34.70px;font-size:8.75px;color:#2e2e2e;">32.5</div>
<div class="t rt" style="left:232.30px;top:295.04px;width:34.70px;font-size:8.75px;color:#2e2e2e;">38.7</div>
<div class="t rt" style="left:268.60px;top:295.04px;width:34.70px;font-size:8.75px;color:#2e2e2e;">36.0</div>
<div class="t rt" style="left:304.90px;top:295.04px;width:34.70px;font-size:8.75px;color:#2e2e2e;">32.0</div>
<div class="t rt" style="left:341.20px;top:295.04px;width:34.70px;font-size:8.75px;color:#2e2e2e;">62.0</div>
<div class="t rt" style="left:377.50px;top:295.04px;width:34.70px;font-size:8.75px;color:#2e2e2e;">20.5</div>
<div class="t rt" style="left:413.80px;top:295.04px;width:34.70px;font-size:8.75px;color:#2e2e2e;">46.0</div>
<div class="t rt" style="left:450.10px;top:295.04px;width:34.70px;font-size:8.75px;color:#2e2e2e;">26.7</div>
<div class="t rt" style="left:486.40px;top:295.04px;width:34.70px;font-size:8.75px;color:#2e2e2e;">29.0</div>
<div class="t rt" style="left:522.70px;top:295.04px;width:34.70px;font-size:8.75px;color:#2e2e2e;">12.0</div>
<div class="t rt" style="left:559.00px;top:295.04px;width:34.70px;font-size:8.75px;color:#2e2e2e;">36.0</div>
<div class="t rt" style="left:595.30px;top:295.04px;width:34.70px;font-size:8.75px;color:#2e2e2e;">29.0</div>
<div class="t rt" style="left:631.60px;top:295.04px;width:41.90px;font-size:8.75px;color:#2e2e2e;">32.0</div>
<div class="t rt" style="left:675.10px;top:295.04px;width:41.90px;font-size:8.75px;color:#2e2e2e;">34.0</div>
<div class="t rt" style="left:718.60px;top:295.04px;width:41.90px;font-size:8.75px;color:#2e2e2e;">30.0</div>
<div class="t rt" style="left:762.10px;top:295.04px;width:41.90px;font-size:8.75px;color:#2e2e2e;">22.0</div>
<div class="t rt" style="left:805.60px;top:295.04px;width:41.90px;font-size:8.75px;color:#2e2e2e;">32.0</div>
<div class="t rt" style="left:849.10px;top:295.04px;width:41.90px;font-size:8.75px;color:#2e2e2e;">18.5</div>
<div class="t rt" style="left:892.60px;top:295.04px;width:41.90px;font-size:8.75px;color:#2e2e2e;">22.0</div>
<div class="t rt" style="left:196.00px;top:309.59px;width:34.70px;font-size:8.75px;color:#2e2e2e;">14.0</div>
<div class="t rt" style="left:232.30px;top:309.59px;width:34.70px;font-size:8.75px;color:#2e2e2e;">8.0</div>
<div class="t rt" style="left:268.60px;top:309.59px;width:34.70px;font-size:8.75px;color:#2e2e2e;">8.0</div>
<div class="t rt" style="left:304.90px;top:309.59px;width:34.70px;font-size:8.75px;color:#2e2e2e;">20.0</div>
<div class="t rt" style="left:341.20px;top:309.59px;width:34.70px;font-size:8.75px;color:#2e2e2e;">10.0</div>
<div class="t rt" style="left:377.50px;top:309.59px;width:34.70px;font-size:8.75px;color:#2e2e2e;">12.0</div>
<div class="t rt" style="left:413.80px;top:309.59px;width:34.70px;font-size:8.75px;color:#2e2e2e;">7.0</div>
<div class="t rt" style="left:450.10px;top:309.59px;width:34.70px;font-size:8.75px;color:#2e2e2e;">6.0</div>
<div class="t rt" style="left:486.40px;top:309.59px;width:34.70px;font-size:8.75px;color:#2e2e2e;">8.0</div>
<div class="t rt" style="left:522.70px;top:309.59px;width:34.70px;font-size:8.75px;color:#2e2e2e;">6.0</div>
<div class="t rt" style="left:559.00px;top:309.59px;width:34.70px;font-size:8.75px;color:#2e2e2e;">14.0</div>
<div class="t rt" style="left:595.30px;top:309.59px;width:34.70px;font-size:8.75px;color:#2e2e2e;">11.0</div>
<div class="t rt" style="left:631.60px;top:309.59px;width:41.90px;font-size:8.75px;color:#2e2e2e;">6.0</div>
<div class="t rt" style="left:675.10px;top:309.59px;width:41.90px;font-size:8.75px;color:#2e2e2e;">8.0</div>
<div class="t rt" style="left:718.60px;top:309.59px;width:41.90px;font-size:8.75px;color:#2e2e2e;">10.0</div>
<div class="t rt" style="left:762.10px;top:309.59px;width:41.90px;font-size:8.75px;color:#2e2e2e;">6.0</div>
<div class="t rt" style="left:805.60px;top:309.59px;width:41.90px;font-size:8.75px;color:#2e2e2e;">14.0</div>
<div class="t rt" style="left:849.10px;top:309.59px;width:41.90px;font-size:8.75px;color:#2e2e2e;">7.0</div>
<div class="t rt" style="left:892.60px;top:309.59px;width:41.90px;font-size:8.75px;color:#2e2e2e;">6.0</div>
<div class="t rt" style="left:196.00px;top:324.14px;width:34.70px;font-size:8.75px;color:#2e2e2e;">39.8</div>
<div class="t rt" style="left:232.30px;top:324.14px;width:34.70px;font-size:8.75px;color:#2e2e2e;">43.7</div>
<div class="t rt" style="left:268.60px;top:324.14px;width:34.70px;font-size:8.75px;color:#2e2e2e;">39.0</div>
<div class="t rt" style="left:304.90px;top:324.14px;width:34.70px;font-size:8.75px;color:#2e2e2e;">40.0</div>
<div class="t rt" style="left:341.20px;top:324.14px;width:34.70px;font-size:8.75px;color:#2e2e2e;">39.8</div>
<div class="t rt" style="left:377.50px;top:324.14px;width:34.70px;font-size:8.75px;color:#2e2e2e;">42.5</div>
<div class="t rt" style="left:413.80px;top:324.14px;width:34.70px;font-size:8.75px;color:#2e2e2e;">40.0</div>
<div class="t rt" style="left:450.10px;top:324.14px;width:34.70px;font-size:8.75px;color:#2e2e2e;">43.8</div>
<div class="t rt" style="left:486.40px;top:324.14px;width:34.70px;font-size:8.75px;color:#2e2e2e;">43.3</div>
<div class="t rt" style="left:196.00px;top:338.69px;width:34.70px;font-size:8.75px;color:#2e2e2e;">23.4</div>
<div class="t rt" style="left:232.30px;top:338.69px;width:34.70px;font-size:8.75px;color:#2e2e2e;">24.5</div>
<div class="t rt" style="left:268.60px;top:338.69px;width:34.70px;font-size:8.75px;color:#2e2e2e;">22.9</div>
<div class="t rt" style="left:304.90px;top:338.69px;width:34.70px;font-size:8.75px;color:#2e2e2e;">20.2</div>
<div class="t rt" style="left:341.20px;top:338.69px;width:34.70px;font-size:8.75px;color:#2e2e2e;">33.8</div>
<div class="t rt" style="left:377.50px;top:338.69px;width:34.70px;font-size:8.75px;color:#2e2e2e;">31.1</div>
<div class="t rt" style="left:413.80px;top:338.69px;width:34.70px;font-size:8.75px;color:#2e2e2e;">29.0</div>
<div class="t rt" style="left:450.10px;top:338.69px;width:34.70px;font-size:8.75px;color:#2e2e2e;">26.0</div>
<div class="t rt" style="left:486.40px;top:338.69px;width:34.70px;font-size:8.75px;color:#2e2e2e;">30.6</div>
<div class="t rt" style="left:522.70px;top:338.69px;width:34.70px;font-size:8.75px;color:#2e2e2e;">24.8</div>
<div class="t rt" style="left:559.00px;top:338.69px;width:34.70px;font-size:8.75px;color:#2e2e2e;">24.8</div>
<div class="t rt" style="left:595.30px;top:338.69px;width:34.70px;font-size:8.75px;color:#2e2e2e;">27.2</div>
<div class="t rt" style="left:631.60px;top:338.69px;width:41.90px;font-size:8.75px;color:#2e2e2e;">26.3</div>
<div class="t rt" style="left:675.10px;top:338.69px;width:41.90px;font-size:8.75px;color:#2e2e2e;">32.3</div>
<div class="t rt" style="left:718.60px;top:338.69px;width:41.90px;font-size:8.75px;color:#2e2e2e;">25.6</div>
<div class="t rt" style="left:762.10px;top:338.69px;width:41.90px;font-size:8.75px;color:#2e2e2e;">30.3</div>
<div class="t rt" style="left:805.60px;top:338.69px;width:41.90px;font-size:8.75px;color:#2e2e2e;">27.4</div>
<div class="t rt" style="left:849.10px;top:338.69px;width:41.90px;font-size:8.75px;color:#2e2e2e;">25.6</div>
<div class="t rt" style="left:892.60px;top:338.69px;width:41.90px;font-size:8.75px;color:#2e2e2e;">21.0</div>
<div class="t rt" style="left:196.00px;top:353.24px;width:34.70px;font-size:8.75px;color:#2e2e2e;">24.0</div>
<div class="t rt" style="left:232.30px;top:353.24px;width:34.70px;font-size:8.75px;color:#2e2e2e;">21.0</div>
<div class="t rt" style="left:268.60px;top:353.24px;width:34.70px;font-size:8.75px;color:#2e2e2e;">23.0</div>
<div class="t rt" style="left:304.90px;top:353.24px;width:34.70px;font-size:8.75px;color:#2e2e2e;">20.7</div>
<div class="t rt" style="left:341.20px;top:353.24px;width:34.70px;font-size:8.75px;color:#2e2e2e;">20.0</div>
<div class="t rt" style="left:377.50px;top:353.24px;width:34.70px;font-size:8.75px;color:#2e2e2e;">17.5</div>
<div class="t rt" style="left:413.80px;top:353.24px;width:34.70px;font-size:8.75px;color:#2e2e2e;">24.0</div>
<div class="t rt" style="left:450.10px;top:353.24px;width:34.70px;font-size:8.75px;color:#2e2e2e;">23.0</div>
<div class="t rt" style="left:486.40px;top:353.24px;width:34.70px;font-size:8.75px;color:#2e2e2e;">23.0</div>
<div class="t rt" style="left:522.70px;top:353.24px;width:34.70px;font-size:8.75px;color:#2e2e2e;">25.5</div>
<div class="t rt" style="left:559.00px;top:353.24px;width:34.70px;font-size:8.75px;color:#2e2e2e;">10.7</div>
<div class="t rt" style="left:595.30px;top:353.24px;width:34.70px;font-size:8.75px;color:#2e2e2e;">12.0</div>
<div class="t rt" style="left:631.60px;top:353.24px;width:41.90px;font-size:8.75px;color:#2e2e2e;">12.5</div>
<div class="t rt" style="left:675.10px;top:353.24px;width:41.90px;font-size:8.75px;color:#2e2e2e;">21.5</div>
<div class="t rt" style="left:718.60px;top:353.24px;width:41.90px;font-size:8.75px;color:#2e2e2e;">16.0</div>
<div class="t rt" style="left:762.10px;top:353.24px;width:41.90px;font-size:8.75px;color:#2e2e2e;">20.0</div>
<div class="t rt" style="left:805.60px;top:353.24px;width:41.90px;font-size:8.75px;color:#2e2e2e;">16.0</div>
<div class="t rt" style="left:849.10px;top:353.24px;width:41.90px;font-size:8.75px;color:#2e2e2e;">14.5</div>
<div class="t rt" style="left:522.70px;top:367.79px;width:34.70px;font-size:8.75px;color:#2e2e2e;">33.0</div>
<div class="t rt" style="left:559.00px;top:367.79px;width:34.70px;font-size:8.75px;color:#2e2e2e;">34.6</div>
<div class="t rt" style="left:595.30px;top:367.79px;width:34.70px;font-size:8.75px;color:#2e2e2e;">29.5</div>
<div class="t rt" style="left:631.60px;top:367.79px;width:41.90px;font-size:8.75px;color:#2e2e2e;">33.8</div>
<div class="t rt" style="left:675.10px;top:367.79px;width:41.90px;font-size:8.75px;color:#2e2e2e;">39.0</div>
<div class="t rt" style="left:718.60px;top:367.79px;width:41.90px;font-size:8.75px;color:#2e2e2e;">36.0</div>
<div class="t rt" style="left:762.10px;top:367.79px;width:41.90px;font-size:8.75px;color:#2e2e2e;">37.0</div>
<div class="t rt" style="left:805.60px;top:367.79px;width:41.90px;font-size:8.75px;color:#2e2e2e;">31.8</div>
<div class="t rt" style="left:849.10px;top:367.79px;width:41.90px;font-size:8.75px;color:#2e2e2e;">32.5</div>
<div class="t rt" style="left:892.60px;top:367.79px;width:41.90px;font-size:8.75px;color:#2e2e2e;">40.0</div>
<div class="t rt" style="left:196.00px;top:383.89px;width:34.70px;font-size:8.75px;color:#1a1a1a;font-weight:bold">217</div>
<div class="t rt" style="left:232.30px;top:383.89px;width:34.70px;font-size:8.75px;color:#1a1a1a;font-weight:bold">215</div>
<div class="t rt" style="left:268.60px;top:383.89px;width:34.70px;font-size:8.75px;color:#1a1a1a;font-weight:bold">209</div>
<div class="t rt" style="left:304.90px;top:383.89px;width:34.70px;font-size:8.75px;color:#1a1a1a;font-weight:bold">210</div>
<div class="t rt" style="left:341.20px;top:383.89px;width:34.70px;font-size:8.75px;color:#1a1a1a;font-weight:bold">253</div>
<div class="t rt" style="left:377.50px;top:383.89px;width:34.70px;font-size:8.75px;color:#1a1a1a;font-weight:bold">207</div>
<div class="t rt" style="left:413.80px;top:383.89px;width:34.70px;font-size:8.75px;color:#1a1a1a;font-weight:bold">228</div>
<div class="t rt" style="left:450.10px;top:383.89px;width:34.70px;font-size:8.75px;color:#1a1a1a;font-weight:bold">203</div>
<div class="t rt" style="left:486.40px;top:383.89px;width:34.70px;font-size:8.75px;color:#1a1a1a;font-weight:bold">202</div>
<div class="t rt" style="left:522.70px;top:383.89px;width:34.70px;font-size:8.75px;color:#1a1a1a;font-weight:bold">150</div>
<div class="t rt" style="left:559.00px;top:383.89px;width:34.70px;font-size:8.75px;color:#1a1a1a;font-weight:bold">191</div>
<div class="t rt" style="left:595.30px;top:383.89px;width:34.70px;font-size:8.75px;color:#1a1a1a;font-weight:bold">199</div>
<div class="t rt" style="left:631.60px;top:383.89px;width:41.90px;font-size:8.75px;color:#1a1a1a;font-weight:bold">190</div>
<div class="t rt" style="left:675.10px;top:383.89px;width:41.90px;font-size:8.75px;color:#1a1a1a;font-weight:bold">222</div>
<div class="t rt" style="left:718.60px;top:383.89px;width:41.90px;font-size:8.75px;color:#1a1a1a;font-weight:bold">200</div>
<div class="t rt" style="left:762.10px;top:383.89px;width:41.90px;font-size:8.75px;color:#1a1a1a;font-weight:bold">208</div>
<div class="t rt" style="left:805.60px;top:383.89px;width:41.90px;font-size:8.75px;color:#1a1a1a;font-weight:bold">220</div>
<div class="t rt" style="left:849.10px;top:383.89px;width:41.90px;font-size:8.75px;color:#1a1a1a;font-weight:bold">187</div>
<div class="t rt" style="left:892.60px;top:383.89px;width:41.90px;font-size:8.75px;color:#1a1a1a;font-weight:bold">176</div>
<div class="t rt" style="left:196.00px;top:413.44px;width:34.70px;font-size:8.75px;color:#2e2e2e;">182</div>
<div class="t rt" style="left:232.30px;top:413.44px;width:34.70px;font-size:8.75px;color:#2e2e2e;">313</div>
<div class="t rt" style="left:268.60px;top:413.44px;width:34.70px;font-size:8.75px;color:#2e2e2e;">122</div>
<div class="t rt" style="left:304.90px;top:413.44px;width:34.70px;font-size:8.75px;color:#2e2e2e;">135</div>
<div class="t rt" style="left:341.20px;top:413.44px;width:34.70px;font-size:8.75px;color:#2e2e2e;">162</div>
<div class="t rt" style="left:377.50px;top:413.44px;width:34.70px;font-size:8.75px;color:#2e2e2e;">177</div>
<div class="t rt" style="left:413.80px;top:413.44px;width:34.70px;font-size:8.75px;color:#2e2e2e;">153</div>
<div class="t rt" style="left:450.10px;top:413.44px;width:34.70px;font-size:8.75px;color:#2e2e2e;">140</div>
<div class="t rt" style="left:486.40px;top:413.44px;width:34.70px;font-size:8.75px;color:#2e2e2e;">323</div>
<div class="t rt" style="left:522.70px;top:413.44px;width:34.70px;font-size:8.75px;color:#2e2e2e;">194</div>
<div class="t rt" style="left:559.00px;top:413.44px;width:34.70px;font-size:8.75px;color:#2e2e2e;">180</div>
<div class="t rt" style="left:595.30px;top:413.44px;width:34.70px;font-size:8.75px;color:#2e2e2e;">140</div>
<div class="t rt" style="left:631.60px;top:413.44px;width:41.90px;font-size:8.75px;color:#2e2e2e;">171</div>
<div class="t rt" style="left:675.10px;top:413.44px;width:41.90px;font-size:8.75px;color:#2e2e2e;">136</div>
<div class="t rt" style="left:718.60px;top:413.44px;width:41.90px;font-size:8.75px;color:#2e2e2e;">172</div>
<div class="t rt" style="left:762.10px;top:413.44px;width:41.90px;font-size:8.75px;color:#2e2e2e;">150</div>
<div class="t rt" style="left:805.60px;top:413.44px;width:41.90px;font-size:8.75px;color:#2e2e2e;">130</div>
<div class="t rt" style="left:849.10px;top:413.44px;width:41.90px;font-size:8.75px;color:#2e2e2e;">152</div>
<div class="t rt" style="left:892.60px;top:413.44px;width:41.90px;font-size:8.75px;color:#2e2e2e;">180</div>
<div class="t rt" style="left:196.00px;top:427.79px;width:34.70px;font-size:8.75px;color:#2e2e2e;">160</div>
<div class="t rt" style="left:232.30px;top:427.79px;width:34.70px;font-size:8.75px;color:#2e2e2e;">194</div>
<div class="t rt" style="left:268.60px;top:427.79px;width:34.70px;font-size:8.75px;color:#2e2e2e;">118</div>
<div class="t rt" style="left:304.90px;top:427.79px;width:34.70px;font-size:8.75px;color:#2e2e2e;">134</div>
<div class="t rt" style="left:341.20px;top:427.79px;width:34.70px;font-size:8.75px;color:#2e2e2e;">141</div>
<div class="t rt" style="left:377.50px;top:427.79px;width:34.70px;font-size:8.75px;color:#2e2e2e;">193</div>
<div class="t rt" style="left:413.80px;top:427.79px;width:34.70px;font-size:8.75px;color:#2e2e2e;">392</div>
<div class="t rt" style="left:450.10px;top:427.79px;width:34.70px;font-size:8.75px;color:#2e2e2e;">211</div>
<div class="t rt" style="left:486.40px;top:427.79px;width:34.70px;font-size:8.75px;color:#2e2e2e;">324</div>
<div class="t rt" style="left:522.70px;top:427.79px;width:34.70px;font-size:8.75px;color:#2e2e2e;">239</div>
<div class="t rt" style="left:559.00px;top:427.79px;width:34.70px;font-size:8.75px;color:#2e2e2e;">195</div>
<div class="t rt" style="left:595.30px;top:427.79px;width:34.70px;font-size:8.75px;color:#2e2e2e;">114</div>
<div class="t rt" style="left:631.60px;top:427.79px;width:41.90px;font-size:8.75px;color:#2e2e2e;">226</div>
<div class="t rt" style="left:675.10px;top:427.79px;width:41.90px;font-size:8.75px;color:#2e2e2e;">199</div>
<div class="t rt" style="left:762.10px;top:427.79px;width:41.90px;font-size:8.75px;color:#2e2e2e;">166</div>
<div class="t rt" style="left:805.60px;top:427.79px;width:41.90px;font-size:8.75px;color:#2e2e2e;">164</div>
<div class="t rt" style="left:849.10px;top:427.79px;width:41.90px;font-size:8.75px;color:#2e2e2e;">321</div>
<div class="t rt" style="left:892.60px;top:427.79px;width:41.90px;font-size:8.75px;color:#2e2e2e;">120</div>
<div class="t rt" style="left:196.00px;top:442.14px;width:34.70px;font-size:8.75px;color:#2e2e2e;">191</div>
<div class="t rt" style="left:232.30px;top:442.14px;width:34.70px;font-size:8.75px;color:#2e2e2e;">185</div>
<div class="t rt" style="left:268.60px;top:442.14px;width:34.70px;font-size:8.75px;color:#2e2e2e;">119</div>
<div class="t rt" style="left:304.90px;top:442.14px;width:34.70px;font-size:8.75px;color:#2e2e2e;">119</div>
<div class="t rt" style="left:341.20px;top:442.14px;width:34.70px;font-size:8.75px;color:#2e2e2e;">155</div>
<div class="t rt" style="left:377.50px;top:442.14px;width:34.70px;font-size:8.75px;color:#2e2e2e;">175</div>
<div class="t rt" style="left:413.80px;top:442.14px;width:34.70px;font-size:8.75px;color:#2e2e2e;">123</div>
<div class="t rt" style="left:450.10px;top:442.14px;width:34.70px;font-size:8.75px;color:#2e2e2e;">123</div>
<div class="t rt" style="left:486.40px;top:442.14px;width:34.70px;font-size:8.75px;color:#2e2e2e;">146</div>
<div class="t rt" style="left:522.70px;top:442.14px;width:34.70px;font-size:8.75px;color:#2e2e2e;">168</div>
<div class="t rt" style="left:559.00px;top:442.14px;width:34.70px;font-size:8.75px;color:#2e2e2e;">172</div>
<div class="t rt" style="left:595.30px;top:442.14px;width:34.70px;font-size:8.75px;color:#2e2e2e;">198</div>
<div class="t rt" style="left:631.60px;top:442.14px;width:41.90px;font-size:8.75px;color:#2e2e2e;">186</div>
<div class="t rt" style="left:675.10px;top:442.14px;width:41.90px;font-size:8.75px;color:#2e2e2e;">116</div>
<div class="t rt" style="left:718.60px;top:442.14px;width:41.90px;font-size:8.75px;color:#2e2e2e;">151</div>
<div class="t rt" style="left:762.10px;top:442.14px;width:41.90px;font-size:8.75px;color:#2e2e2e;">113</div>
<div class="t rt" style="left:805.60px;top:442.14px;width:41.90px;font-size:8.75px;color:#2e2e2e;">99</div>
<div class="t rt" style="left:849.10px;top:442.14px;width:41.90px;font-size:8.75px;color:#2e2e2e;">115</div>
<div class="t rt" style="left:892.60px;top:442.14px;width:41.90px;font-size:8.75px;color:#2e2e2e;">120</div>
<div class="t rt" style="left:196.00px;top:456.49px;width:34.70px;font-size:8.75px;color:#2e2e2e;">1,912</div>
<div class="t rt" style="left:232.30px;top:456.49px;width:34.70px;font-size:8.75px;color:#2e2e2e;">4,201</div>
<div class="t rt" style="left:268.60px;top:456.49px;width:34.70px;font-size:8.75px;color:#2e2e2e;">2,850</div>
<div class="t rt" style="left:304.90px;top:456.49px;width:34.70px;font-size:8.75px;color:#2e2e2e;">2,322</div>
<div class="t rt" style="left:341.20px;top:456.49px;width:34.70px;font-size:8.75px;color:#2e2e2e;">2,859</div>
<div class="t rt" style="left:377.50px;top:456.49px;width:34.70px;font-size:8.75px;color:#2e2e2e;">2,482</div>
<div class="t rt" style="left:413.80px;top:456.49px;width:34.70px;font-size:8.75px;color:#2e2e2e;">2,785</div>
<div class="t rt" style="left:450.10px;top:456.49px;width:34.70px;font-size:8.75px;color:#2e2e2e;">3,298</div>
<div class="t rt" style="left:486.40px;top:456.49px;width:34.70px;font-size:8.75px;color:#2e2e2e;">1,580</div>
<div class="t rt" style="left:522.70px;top:456.49px;width:34.70px;font-size:8.75px;color:#2e2e2e;">1,219</div>
<div class="t rt" style="left:559.00px;top:456.49px;width:34.70px;font-size:8.75px;color:#2e2e2e;">1,064</div>
<div class="t rt" style="left:595.30px;top:456.49px;width:34.70px;font-size:8.75px;color:#2e2e2e;">1,341</div>
<div class="t rt" style="left:631.60px;top:456.49px;width:41.90px;font-size:8.75px;color:#2e2e2e;">309</div>
<div class="t rt" style="left:718.60px;top:456.49px;width:41.90px;font-size:8.75px;color:#2e2e2e;">186</div>
<div class="t rt" style="left:762.10px;top:456.49px;width:41.90px;font-size:8.75px;color:#2e2e2e;">1,280</div>
<div class="t rt" style="left:805.60px;top:456.49px;width:41.90px;font-size:8.75px;color:#2e2e2e;">1,438</div>
<div class="t rt" style="left:849.10px;top:456.49px;width:41.90px;font-size:8.75px;color:#2e2e2e;">1,707</div>
<div class="t rt" style="left:892.60px;top:456.49px;width:41.90px;font-size:8.75px;color:#2e2e2e;">1,410</div>
<div class="t rt" style="left:196.00px;top:470.84px;width:34.70px;font-size:8.75px;color:#2e2e2e;">257</div>
<div class="t rt" style="left:232.30px;top:470.84px;width:34.70px;font-size:8.75px;color:#2e2e2e;">246</div>
<div class="t rt" style="left:268.60px;top:470.84px;width:34.70px;font-size:8.75px;color:#2e2e2e;">187</div>
<div class="t rt" style="left:304.90px;top:470.84px;width:34.70px;font-size:8.75px;color:#2e2e2e;">122</div>
<div class="t rt" style="left:341.20px;top:470.84px;width:34.70px;font-size:8.75px;color:#2e2e2e;">159</div>
<div class="t rt" style="left:377.50px;top:470.84px;width:34.70px;font-size:8.75px;color:#2e2e2e;">161</div>
<div class="t rt" style="left:413.80px;top:470.84px;width:34.70px;font-size:8.75px;color:#2e2e2e;">174</div>
<div class="t rt" style="left:450.10px;top:470.84px;width:34.70px;font-size:8.75px;color:#2e2e2e;">139</div>
<div class="t rt" style="left:486.40px;top:470.84px;width:34.70px;font-size:8.75px;color:#2e2e2e;">200</div>
<div class="t rt" style="left:196.00px;top:485.19px;width:34.70px;font-size:8.75px;color:#2e2e2e;">1,925</div>
<div class="t rt" style="left:232.30px;top:485.19px;width:34.70px;font-size:8.75px;color:#2e2e2e;">1,679</div>
<div class="t rt" style="left:268.60px;top:485.19px;width:34.70px;font-size:8.75px;color:#2e2e2e;">2,621</div>
<div class="t rt" style="left:304.90px;top:485.19px;width:34.70px;font-size:8.75px;color:#2e2e2e;">2,267</div>
<div class="t rt" style="left:341.20px;top:485.19px;width:34.70px;font-size:8.75px;color:#2e2e2e;">2,547</div>
<div class="t rt" style="left:377.50px;top:485.19px;width:34.70px;font-size:8.75px;color:#2e2e2e;">1,902</div>
<div class="t rt" style="left:413.80px;top:485.19px;width:34.70px;font-size:8.75px;color:#2e2e2e;">2,961</div>
<div class="t rt" style="left:450.10px;top:485.19px;width:34.70px;font-size:8.75px;color:#2e2e2e;">2,222</div>
<div class="t rt" style="left:486.40px;top:485.19px;width:34.70px;font-size:8.75px;color:#2e2e2e;">1,605</div>
<div class="t rt" style="left:522.70px;top:485.19px;width:34.70px;font-size:8.75px;color:#2e2e2e;">2,316</div>
<div class="t rt" style="left:559.00px;top:485.19px;width:34.70px;font-size:8.75px;color:#2e2e2e;">1,396</div>
<div class="t rt" style="left:595.30px;top:485.19px;width:34.70px;font-size:8.75px;color:#2e2e2e;">1,533</div>
<div class="t rt" style="left:631.60px;top:485.19px;width:41.90px;font-size:8.75px;color:#2e2e2e;">1,581</div>
<div class="t rt" style="left:675.10px;top:485.19px;width:41.90px;font-size:8.75px;color:#2e2e2e;">1,732</div>
<div class="t rt" style="left:718.60px;top:485.19px;width:41.90px;font-size:8.75px;color:#2e2e2e;">1,606</div>
<div class="t rt" style="left:762.10px;top:485.19px;width:41.90px;font-size:8.75px;color:#2e2e2e;">1,683</div>
<div class="t rt" style="left:805.60px;top:485.19px;width:41.90px;font-size:8.75px;color:#2e2e2e;">1,601</div>
<div class="t rt" style="left:849.10px;top:485.19px;width:41.90px;font-size:8.75px;color:#2e2e2e;">1,400</div>
<div class="t rt" style="left:892.60px;top:485.19px;width:41.90px;font-size:8.75px;color:#2e2e2e;">1,110</div>
<div class="t rt" style="left:268.60px;top:499.54px;width:34.70px;font-size:8.75px;color:#2e2e2e;">49</div>
<div class="t rt" style="left:522.70px;top:499.54px;width:34.70px;font-size:8.75px;color:#2e2e2e;">13</div>
<div class="t rt" style="left:762.10px;top:499.54px;width:41.90px;font-size:8.75px;color:#2e2e2e;">32</div>
<div class="t rt" style="left:849.10px;top:499.54px;width:41.90px;font-size:8.75px;color:#2e2e2e;">21</div>
<div class="t rt" style="left:522.70px;top:513.89px;width:34.70px;font-size:8.75px;color:#2e2e2e;">200</div>
<div class="t rt" style="left:559.00px;top:513.89px;width:34.70px;font-size:8.75px;color:#2e2e2e;">196</div>
<div class="t rt" style="left:595.30px;top:513.89px;width:34.70px;font-size:8.75px;color:#2e2e2e;">166</div>
<div class="t rt" style="left:631.60px;top:513.89px;width:41.90px;font-size:8.75px;color:#2e2e2e;">189</div>
<div class="t rt" style="left:675.10px;top:513.89px;width:41.90px;font-size:8.75px;color:#2e2e2e;">126</div>
<div class="t rt" style="left:718.60px;top:513.89px;width:41.90px;font-size:8.75px;color:#2e2e2e;">162</div>
<div class="t rt" style="left:762.10px;top:513.89px;width:41.90px;font-size:8.75px;color:#2e2e2e;">160</div>
<div class="t rt" style="left:805.60px;top:513.89px;width:41.90px;font-size:8.75px;color:#2e2e2e;">102</div>
<div class="t rt" style="left:849.10px;top:513.89px;width:41.90px;font-size:8.75px;color:#2e2e2e;">167</div>
<div class="t rt" style="left:892.60px;top:513.89px;width:41.90px;font-size:8.75px;color:#2e2e2e;">140</div>
<div class="t rt" style="left:232.30px;top:528.24px;width:34.70px;font-size:8.75px;color:#2e2e2e;">91</div>
<div class="t rt" style="left:522.70px;top:528.24px;width:34.70px;font-size:8.75px;color:#2e2e2e;">188</div>
<div class="t rt" style="left:718.60px;top:528.24px;width:41.90px;font-size:8.75px;color:#2e2e2e;">0</div>
<div class="t rt" style="left:196.00px;top:545.29px;width:34.70px;font-size:8.75px;color:#1a1a1a;font-weight:bold">494</div>
<div class="t rt" style="left:232.30px;top:545.29px;width:34.70px;font-size:8.75px;color:#1a1a1a;font-weight:bold">476</div>
<div class="t rt" style="left:268.60px;top:545.29px;width:34.70px;font-size:8.75px;color:#1a1a1a;font-weight:bold">497</div>
<div class="t rt" style="left:304.90px;top:545.29px;width:34.70px;font-size:8.75px;color:#1a1a1a;font-weight:bold">478</div>
<div class="t rt" style="left:341.20px;top:545.29px;width:34.70px;font-size:8.75px;color:#1a1a1a;font-weight:bold">618</div>
<div class="t rt" style="left:377.50px;top:545.29px;width:34.70px;font-size:8.75px;color:#1a1a1a;font-weight:bold">578</div>
<div class="t rt" style="left:413.80px;top:545.29px;width:34.70px;font-size:8.75px;color:#1a1a1a;font-weight:bold">813</div>
<div class="t rt" style="left:450.10px;top:545.29px;width:34.70px;font-size:8.75px;color:#1a1a1a;font-weight:bold">470</div>
<div class="t rt" style="left:486.40px;top:545.29px;width:34.70px;font-size:8.75px;color:#1a1a1a;font-weight:bold">528</div>
<div class="t rt" style="left:522.70px;top:545.29px;width:34.70px;font-size:8.75px;color:#1a1a1a;font-weight:bold">482</div>
<div class="t rt" style="left:559.00px;top:545.29px;width:34.70px;font-size:8.75px;color:#1a1a1a;font-weight:bold">390</div>
<div class="t rt" style="left:595.30px;top:545.29px;width:34.70px;font-size:8.75px;color:#1a1a1a;font-weight:bold">389</div>
<div class="t rt" style="left:631.60px;top:545.29px;width:41.90px;font-size:8.75px;color:#1a1a1a;font-weight:bold">425</div>
<div class="t rt" style="left:675.10px;top:545.29px;width:41.90px;font-size:8.75px;color:#1a1a1a;font-weight:bold">426</div>
<div class="t rt" style="left:718.60px;top:545.29px;width:41.90px;font-size:8.75px;color:#1a1a1a;font-weight:bold">408</div>
<div class="t rt" style="left:762.10px;top:545.29px;width:41.90px;font-size:8.75px;color:#1a1a1a;font-weight:bold">412</div>
<div class="t rt" style="left:805.60px;top:545.29px;width:41.90px;font-size:8.75px;color:#1a1a1a;font-weight:bold">403</div>
<div class="t rt" style="left:849.10px;top:545.29px;width:41.90px;font-size:8.75px;color:#1a1a1a;font-weight:bold">445</div>
<div class="t rt" style="left:892.60px;top:545.29px;width:41.90px;font-size:8.75px;color:#1a1a1a;font-weight:bold">260</div>
<div class="abs" style="left:195.10px;top:182.00px;width:1.20px;height:378.00px;background:#3a3a3a"></div>
<div class="abs" style="left:630.90px;top:231.20px;width:1.20px;height:328.80px;background:#3a3a3a"></div>
<div class="abs" style="left:37.00px;top:259.60px;width:891.00px;height:1.40px;background:#333"></div>
<div class="abs" style="left:65.30px;top:377.40px;width:862.70px;height:1.70px;background:#2a2a2a"></div>
<div class="abs" style="left:65.30px;top:539.30px;width:862.70px;height:1.70px;background:#2a2a2a"></div>
<div class="t " style="left:67.00px;top:199.23px;font-size:15.20px;font-weight:bold;color:#111"><u style="text-decoration-color:#7a7a7a;text-decoration-thickness:1.3px;text-underline-offset:1.6px">Provider 22</u></div>
<div class="abs" style="left:179.40px;top:198.00px;width:14.40px;height:11.50px;background:#ececec;border:1px solid #d6d6d6"></div>
<svg style="left:183.00px;top:201.00px" width="8.00" height="5.00" viewBox="294.00 301.00 8.00 5.00"><path d="M295.6 302.4 H300.2 L297.9 305 Z" fill="#222"/></svg>
<div class="abs" style="left:64.20px;top:195.20px;width:132.70px;height:22.50px;border:2px solid #2b7de9"></div>
<div class="abs" style="left:194.30px;top:215.30px;width:4.00px;height:4.00px;background:#2b7de9;border-radius:50%"></div>
</div>
</body></html>
